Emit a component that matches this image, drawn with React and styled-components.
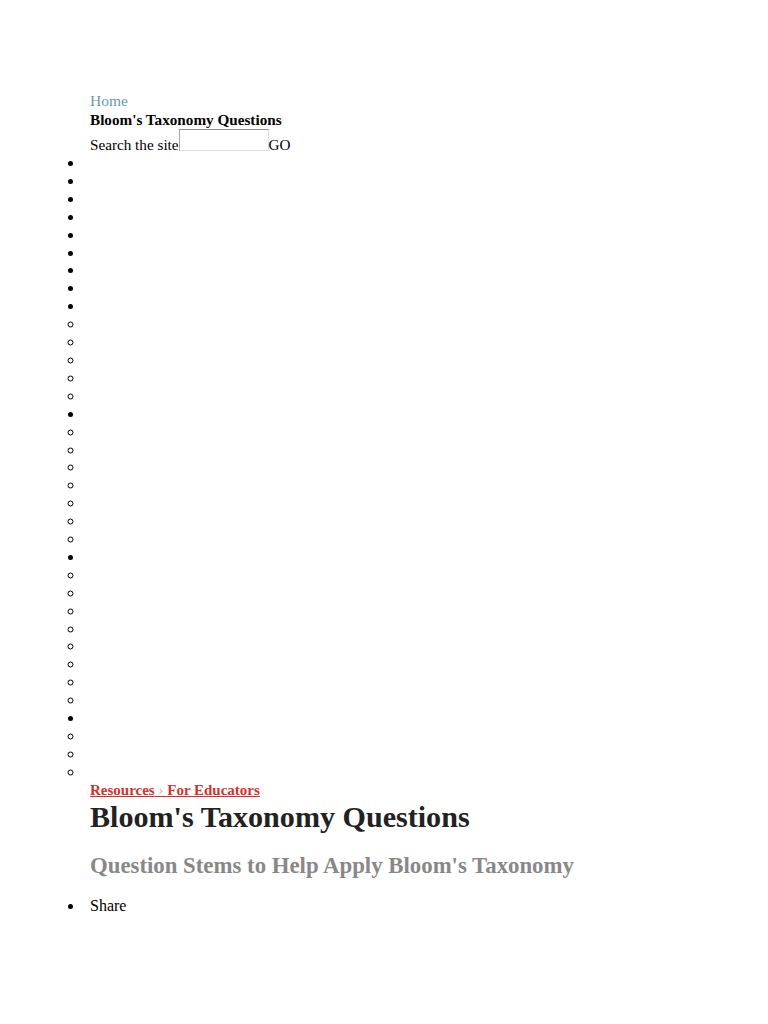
import styled, { createGlobalStyle } from "styled-components"

const GlobalStyle = createGlobalStyle`
  html, body {
    margin: 0;
    padding: 0;
    background: #ffffff;
  }
  body {
    font-family: "Liberation Serif", "Times New Roman", serif;
    font-size: 16px;
    color: #000000;
  }
`

// sub menus of the site nav, by number of entries
const subMenus = [5, 7, 8, 3]

export default function App() {
  return (
    <>
      <GlobalStyle />
      <Page>
        <Header>
          <HomeLink href="#">Home</HomeLink>
          <SiteTitle>Bloom's Taxonomy Questions</SiteTitle>
          <SearchForm>
            <label htmlFor="q">Search the site</label>
            <SearchInput id="q" type="text" />
            <span>GO</span>
          </SearchForm>
        </Header>

        <NavList>
          {Array.from({ length: 8 }).map((_, i) => (
            <NavItem key={i} />
          ))}
          {subMenus.map((count, g) => (
            <NavItem key={"g" + g}>
              <Blank />
              <SubList>
                {Array.from({ length: count }).map((_, i) => (
                  <NavItem key={i} />
                ))}
              </SubList>
            </NavItem>
          ))}
        </NavList>

        <Breadcrumb>
          <Crumb href="#">Resources</Crumb>
          <Sep> › </Sep>
          <Crumb href="#">For Educators</Crumb>
        </Breadcrumb>
        <Title>Bloom's Taxonomy Questions</Title>
        <Subtitle>Question Stems to Help Apply Bloom's Taxonomy</Subtitle>

        <ShareList>
          <ShareItem>Share</ShareItem>
        </ShareList>
      </Page>
    </>
  )
}

const Page = styled.div`
  padding: 92px 0 0 90px;
  line-height: 18px;
`

const Header = styled.div`
  display: flex;
  flex-direction: column;
`

const HomeLink = styled.a`
  color: #689ab3;
  text-decoration: none;
  font-size: 15.5px;
  line-height: 18px;
`

const SiteTitle = styled.div`
  font-weight: bold;
  font-size: 15.2px;
  line-height: 18px;
  margin-top: 1px;
`

const SearchForm = styled.div`
  display: flex;
  align-items: flex-end;
  font-size: 15.2px;
  line-height: 18px;
`

const SearchInput = styled.input`
  box-sizing: border-box;
  width: 90px;
  height: 22px;
  margin: 0 0 3px;
  padding: 1px 2px;
  border: 1px solid #dcdcdc;
  border-top-color: #8f8f8f;
  border-left-color: #a8a8a8;
  background: #ffffff;
  outline: none;
`

const NavList = styled.ul`
  margin: 0 0 0 -6px;
  padding: 0;
  list-style: disc outside;
`

const NavItem = styled.li`
  line-height: 17.9px;
  min-height: 17.9px;
`

const Blank = styled.span`
  display: inline-block;
  width: 0;
  height: 0;
`

const SubList = styled.ul`
  margin: 0;
  padding: 0;
  list-style: circle outside;
`

const Breadcrumb = styled.div`
  font-size: 15px;
  font-weight: bold;
  line-height: 18px;
`

const Crumb = styled.a`
  color: #d4312e;
  text-decoration: underline;
`

const Sep = styled.span`
  color: #c8c8c8;
  text-decoration: underline;
  text-decoration-color: #d4312e;
`

const Title = styled.h1`
  margin: 0;
  font-size: 30.1px;
  font-weight: bold;
  line-height: 36px;
  color: #222222;
`

const Subtitle = styled.h2`
  margin: 17px 0 0;
  font-size: 22.8px;
  line-height: 28px;
  font-weight: bold;
  color: #888888;
`

const ShareList = styled.ul`
  margin: 17px 0 0 -6px;
  padding: 0;
  list-style: disc outside;
`

const ShareItem = styled.li`
  padding-left: 6px;
  line-height: 18px;
`
